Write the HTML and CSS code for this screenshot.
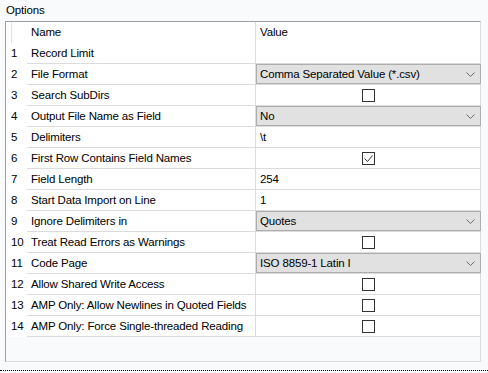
FILE: index.html
```html
<!DOCTYPE html>
<html lang="en">
<head>
    <meta charset="UTF-8">
    <title>Options</title>
    <link rel="stylesheet" href="styles.css">
</head>
<body>
    <div class="label">Options</div>
    <div class="panel">
        <div class="row head">
            <div class="num"></div>
            <div class="name">Name</div>
            <div class="value">Value</div>
        </div>
        <div class="row first">
            <div class="num">1</div>
            <div class="name">Record Limit</div>
            <div class="value"></div>
        </div>
        <div class="row">
            <div class="num">2</div>
            <div class="name">File Format</div>
            <div class="value"><div class="combo">Comma Separated Value (*.csv)<svg class="chev" width="9" height="5" viewBox="0 0 9 5"><path d="M0.5 0.5 L4.5 4.5 L8.5 0.5" fill="none" stroke="#6d6d6d"/></svg></div></div>
        </div>
        <div class="row">
            <div class="num">3</div>
            <div class="name">Search SubDirs</div>
            <div class="value center"><span class="box"></span></div>
        </div>
        <div class="row">
            <div class="num">4</div>
            <div class="name">Output File Name as Field</div>
            <div class="value"><div class="combo">No<svg class="chev" width="9" height="5" viewBox="0 0 9 5"><path d="M0.5 0.5 L4.5 4.5 L8.5 0.5" fill="none" stroke="#6d6d6d"/></svg></div></div>
        </div>
        <div class="row">
            <div class="num">5</div>
            <div class="name">Delimiters</div>
            <div class="value text">\t</div>
        </div>
        <div class="row">
            <div class="num">6</div>
            <div class="name">First Row Contains Field Names</div>
            <div class="value center"><span class="box"><svg width="11" height="11" viewBox="0 0 11 11"><path d="M1.5 5.5 L4.5 8.5 L9.5 2.5" fill="none" stroke="#333" stroke-width="1"/></svg></span></div>
        </div>
        <div class="row">
            <div class="num">7</div>
            <div class="name">Field Length</div>
            <div class="value text">254</div>
        </div>
        <div class="row">
            <div class="num">8</div>
            <div class="name">Start Data Import on Line</div>
            <div class="value text">1</div>
        </div>
        <div class="row">
            <div class="num">9</div>
            <div class="name">Ignore Delimiters in</div>
            <div class="value"><div class="combo">Quotes<svg class="chev" width="9" height="5" viewBox="0 0 9 5"><path d="M0.5 0.5 L4.5 4.5 L8.5 0.5" fill="none" stroke="#6d6d6d"/></svg></div></div>
        </div>
        <div class="row">
            <div class="num">10</div>
            <div class="name">Treat Read Errors as Warnings</div>
            <div class="value center"><span class="box"></span></div>
        </div>
        <div class="row">
            <div class="num">11</div>
            <div class="name">Code Page</div>
            <div class="value"><div class="combo">ISO 8859-1 Latin I<svg class="chev" width="9" height="5" viewBox="0 0 9 5"><path d="M0.5 0.5 L4.5 4.5 L8.5 0.5" fill="none" stroke="#6d6d6d"/></svg></div></div>
        </div>
        <div class="row">
            <div class="num">12</div>
            <div class="name">Allow Shared Write Access</div>
            <div class="value center"><span class="box"></span></div>
        </div>
        <div class="row">
            <div class="num">13</div>
            <div class="name">AMP Only: Allow Newlines in Quoted Fields</div>
            <div class="value center"><span class="box"></span></div>
        </div>
        <div class="row">
            <div class="num">14</div>
            <div class="name">AMP Only: Force Single-threaded Reading</div>
            <div class="value center"><span class="box"></span></div>
        </div>
    </div>
    <div class="focus"></div>
</body>
</html>
```

FILE: styles.css
```css
body {
    margin: 0;
    background: #f9fafc;
    font-family: "Liberation Sans", Arial, sans-serif;
    font-size: 11.5px;
    letter-spacing: -0.15px;
    color: #000;
}
.label {
    height: 21px;
    line-height: 21px;
    padding-left: 6px;
}
.panel {
    margin-left: 5px;
    width: 474px;
    height: 339px;
    border-top: 1px solid #a0a0a0;
    border-left: 1px solid #a0a0a0;
    border-right: 1px solid #dcdcdc;
    border-bottom: 1px solid #dcdcdc;
}
.row {
    display: grid;
    grid-template-columns: 21px 228px 1fr;
    height: 21px;
    background: #fff;
}
.row .num {
    padding-left: 5px;
    line-height: 20px;
}
.row .name {
    padding-left: 4px;
    line-height: 20px;
    border-bottom: 1px solid #dcdcdc;
    white-space: nowrap;
}
.row .value {
    border-left: 1px solid #dcdcdc;
    border-bottom: 1px solid #dcdcdc;
    display: flex;
    align-items: stretch;
}
.row.head .num {
    border-right: 1px solid #e3e3e3;
    width: 0;
}
.row.head .name,
.row.head .value {
    border-bottom: none;
}
.row.head .value {
    padding-left: 4px;
    line-height: 20px;
}
.value.text {
    padding-left: 4px;
    line-height: 20px;
}
.value.center {
    justify-content: center;
    align-items: center;
}
.combo {
    flex: 1;
    display: flex;
    align-items: center;
    justify-content: space-between;
    background: #e1e1e1;
    border: 1px solid #adadad;
    padding: 0 5px 0 3px;
    margin-right: -1px;
}
.chev {
    margin-top: 1px;
}
.box {
    width: 11px;
    height: 11px;
    border: 1px solid #333;
    background: #fff;
    display: flex;
}
.focus {
    margin-top: 8px;
    border-top: 1px dotted #000;
}
```
